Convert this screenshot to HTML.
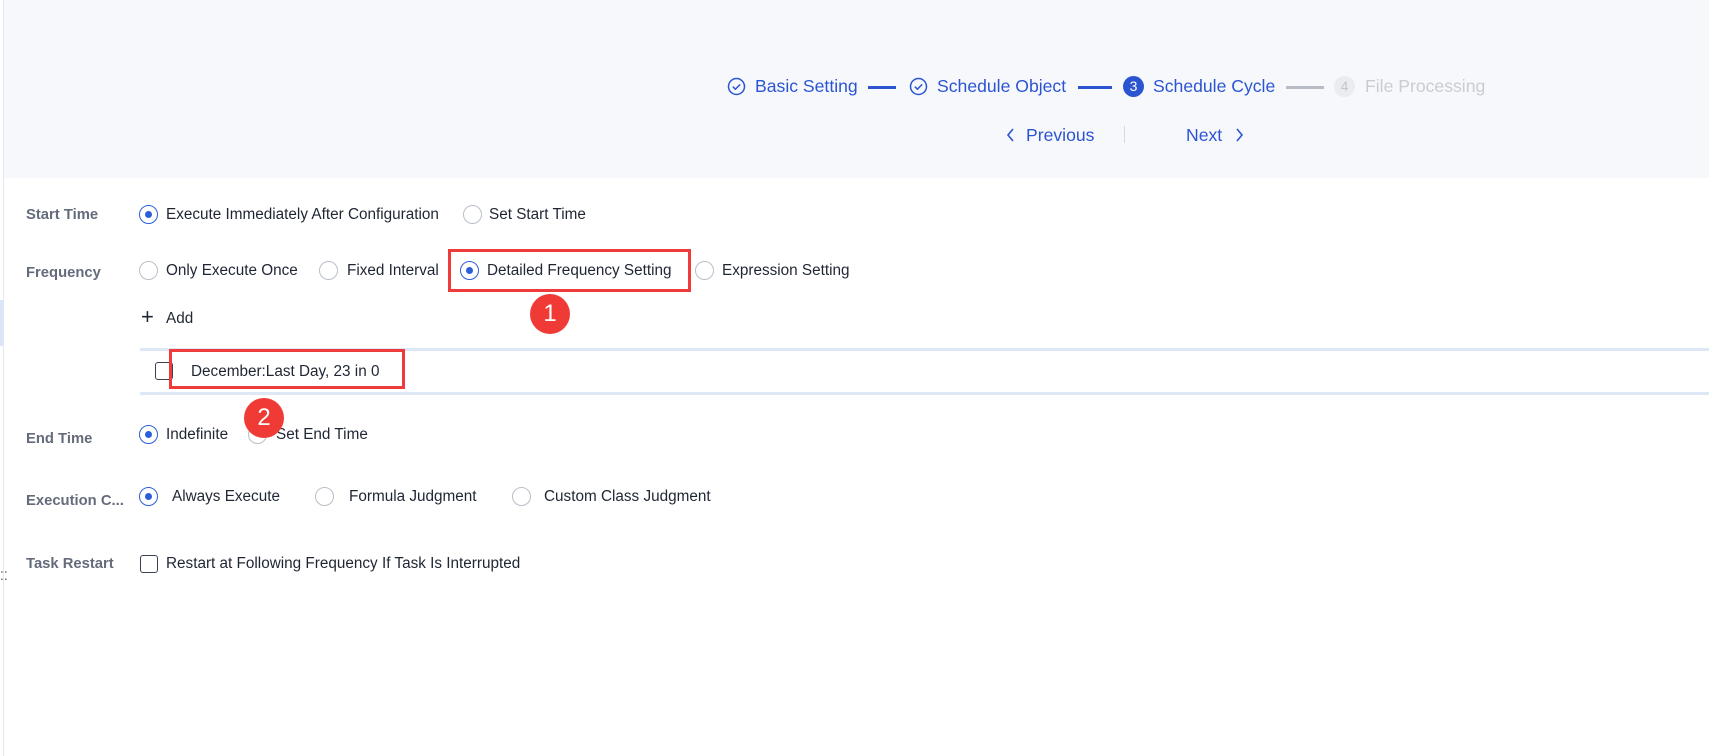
<!DOCTYPE html>
<html><head><meta charset="utf-8"><style>
*{margin:0;padding:0;box-sizing:border-box}
body{width:1709px;height:756px;background:#fff;font-family:"Liberation Sans",sans-serif;position:relative;overflow:hidden;color:#1f2633}
.a{position:absolute;white-space:nowrap}
.hdr{position:absolute;left:4px;top:0;width:1705px;height:178px;background:#f7f8fc}
.lb{position:absolute;left:26px;font-size:14.8px;font-weight:bold;color:#646b7a}
.t{position:absolute;font-size:15.3px;color:#1f2633;white-space:nowrap}
.r{position:absolute;width:19px;height:19px;border:1px solid #b9bec8;border-radius:50%;background:#fff}
.r.on{border:1.5px solid #2b5fd9}
.r.on::after{content:"";position:absolute;left:4.5px;top:4.5px;width:7px;height:7px;border-radius:50%;background:#2b5fd9}
.cb{position:absolute;width:18px;height:18px;border:1.5px solid #3a4150;border-radius:3px;background:#fff}
.st{position:absolute;font-size:17.6px;color:#2b55d0;white-space:nowrap;top:76px}
.bl{position:absolute;height:3px;top:86px;background:#2b55d0}
.red{position:absolute;border:3px solid #ee3b3b}
.bad{position:absolute;width:40px;height:40px;border-radius:50%;background:#f03a35;color:#fff;font-size:24px;text-align:center;line-height:40px}
</style></head><body>
<div class="a" style="left:3px;top:0;width:1px;height:756px;background:#e3e7f0"></div>
<div class="hdr"></div>
<div class="a" style="left:0;top:300px;width:3px;height:46px;background:#dbe6fa"></div>
<div class="a" style="left:0;top:573px;font-size:12px;color:#555;line-height:6px">⁚⁚</div>

<svg class="a" style="left:727px;top:77px" width="19" height="19" viewBox="0 0 19 19"><circle cx="9.5" cy="9.5" r="8" fill="none" stroke="#2b55d0" stroke-width="1.5"/><path d="M5.8 9.6l2.6 2.6 4.8-4.8" fill="none" stroke="#2b55d0" stroke-width="1.5"/></svg>
<div class="st" style="left:755px">Basic Setting</div>
<div class="bl" style="left:868px;width:28px"></div>
<svg class="a" style="left:909px;top:77px" width="19" height="19" viewBox="0 0 19 19"><circle cx="9.5" cy="9.5" r="8" fill="none" stroke="#2b55d0" stroke-width="1.5"/><path d="M5.8 9.6l2.6 2.6 4.8-4.8" fill="none" stroke="#2b55d0" stroke-width="1.5"/></svg>
<div class="st" style="left:937px">Schedule Object</div>
<div class="bl" style="left:1078px;width:34px"></div>
<div class="a" style="left:1123px;top:76px;width:21px;height:21px;border-radius:50%;background:#2b55d0;color:#fff;font-size:14px;text-align:center;line-height:21px">3</div>
<div class="st" style="left:1153px">Schedule Cycle</div>
<div class="bl" style="left:1286px;width:38px;background:#b8bcc6"></div>
<div class="a" style="left:1334px;top:76px;width:21px;height:21px;border-radius:50%;background:#ebecf0;color:#c3c6cd;font-size:14px;text-align:center;line-height:21px">4</div>
<div class="st" style="left:1365px;color:#c9ccd3">File Processing</div>

<svg class="a" style="left:1005px;top:127px" width="12" height="16" viewBox="0 0 12 16"><path d="M8 2L3 8l5 6" fill="none" stroke="#2b55d0" stroke-width="1.6"/></svg>
<div class="st" style="left:1026px;top:125px">Previous</div>
<div class="a" style="left:1124px;top:126px;width:1px;height:17px;background:#d5d8df"></div>
<div class="st" style="left:1186px;top:125px">Next</div>
<svg class="a" style="left:1233px;top:127px" width="12" height="16" viewBox="0 0 12 16"><path d="M4 2l5 6-5 6" fill="none" stroke="#2b55d0" stroke-width="1.6"/></svg>

<div class="lb" style="top:207px">Start Time</div>
<div class="r on" style="left:139px;top:205px"></div><div class="t" style="left:166px;top:206px">Execute Immediately After Configuration</div>
<div class="r" style="left:463px;top:205px"></div><div class="t" style="left:489px;top:206px">Set Start Time</div>

<div class="lb" style="top:265px">Frequency</div>
<div class="r" style="left:139px;top:261px"></div><div class="t" style="left:166px;top:262px">Only Execute Once</div>
<div class="r" style="left:319px;top:261px"></div><div class="t" style="left:347px;top:262px">Fixed Interval</div>
<div class="r on" style="left:460px;top:261px"></div><div class="t" style="left:487px;top:262px">Detailed Frequency Setting</div>
<div class="r" style="left:695px;top:261px"></div><div class="t" style="left:722px;top:262px">Expression Setting</div>
<div class="red" style="left:448px;top:249px;width:243px;height:43px"></div>
<div class="bad" style="left:530px;top:294px">1</div>

<div class="a" style="left:141px;top:306px;font-size:22px;line-height:22px;color:#1f2633">+</div>
<div class="t" style="left:166px;top:310px">Add</div>

<div class="a" style="left:140px;top:348px;width:1569px;height:3px;background:#dde7f6"></div>
<div class="a" style="left:140px;top:392px;width:1569px;height:3px;background:#dde7f6"></div>
<div class="cb" style="left:155px;top:362px"></div>
<div class="t" style="left:191px;top:363px">December:Last Day, 23 in 0</div>
<div class="red" style="left:169px;top:349px;width:236px;height:40px"></div>

<div class="lb" style="top:431px">End Time</div>
<div class="r on" style="left:139px;top:425px"></div><div class="t" style="left:166px;top:426px">Indefinite</div>
<div class="r" style="left:248px;top:425px"></div><div class="t" style="left:276px;top:426px">Set End Time</div>
<div class="bad" style="left:244px;top:398px">2</div>

<div class="lb" style="top:493px">Execution C...</div>
<div class="r on" style="left:139px;top:487px"></div><div class="t" style="left:172px;top:488px">Always Execute</div>
<div class="r" style="left:315px;top:487px"></div><div class="t" style="left:349px;top:488px">Formula Judgment</div>
<div class="r" style="left:512px;top:487px"></div><div class="t" style="left:544px;top:488px">Custom Class Judgment</div>

<div class="lb" style="top:556px">Task Restart</div>
<div class="cb" style="left:140px;top:555px"></div>
<div class="t" style="left:166px;top:555px">Restart at Following Frequency If Task Is Interrupted</div>
</body></html>
